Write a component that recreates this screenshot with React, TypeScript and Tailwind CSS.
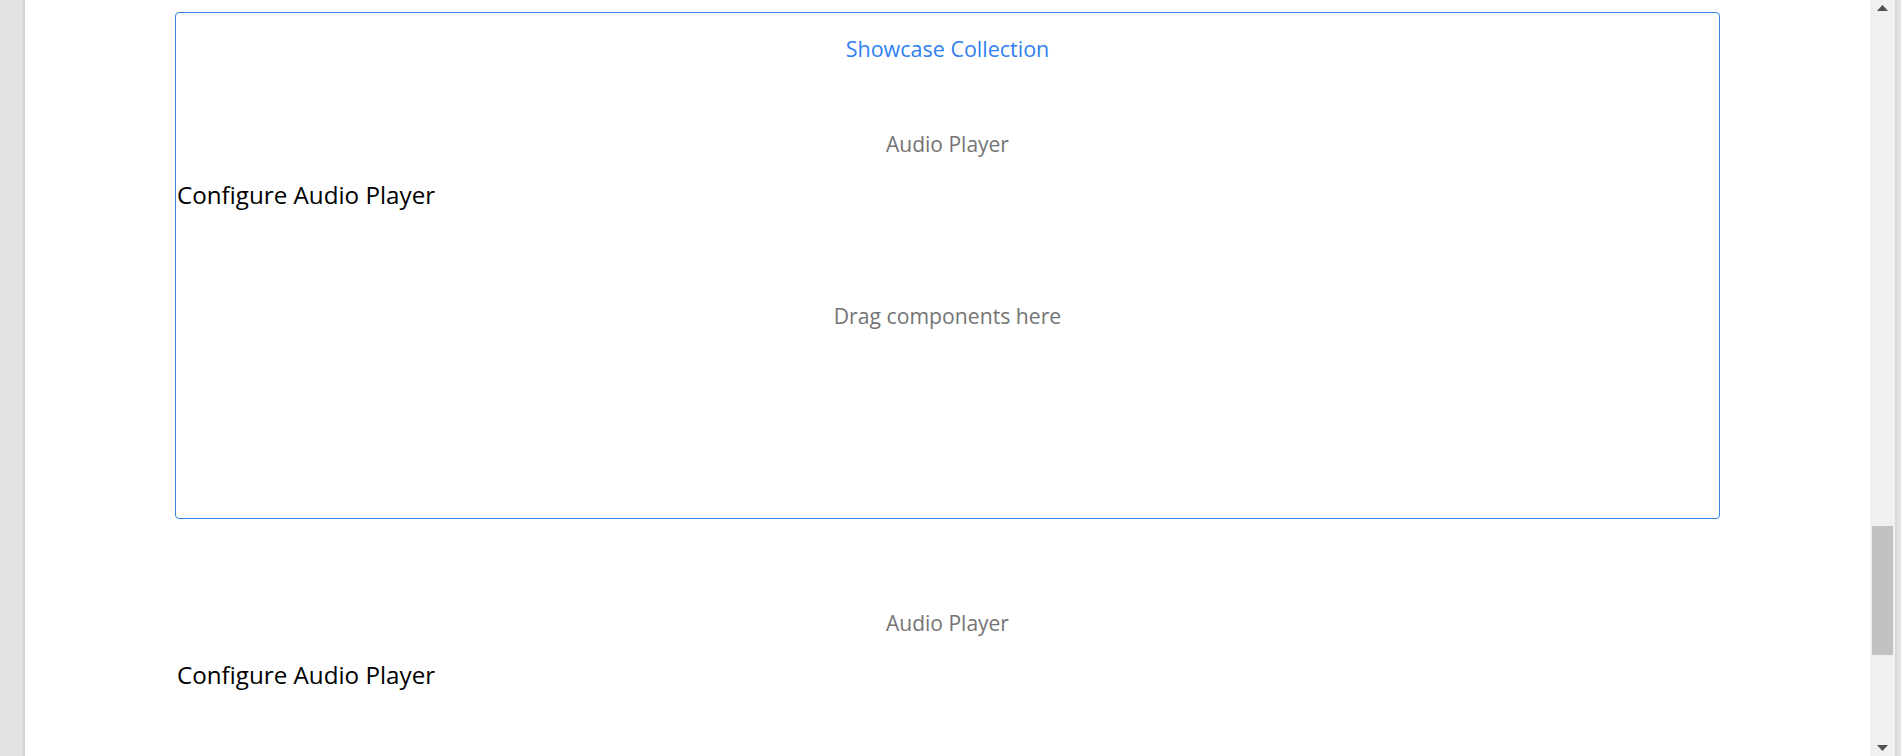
import React from 'react';

const font = { fontFamily: '"Open Sans", "Noto Sans", sans-serif' };

const Triangle = ({ up }: { up: boolean }) => (
  <svg width="11" height="6" viewBox="0 0 11 6" className="block">
    <polygon points={up ? '5.5,0 11,6 0,6' : '0,0 11,0 5.5,6'} fill="#505050" />
  </svg>
);

const Scrollbar = () => (
  <div className="flex w-[25px] shrink-0 flex-col bg-[#f0f0f0]">
    <div className="flex h-[16px] justify-center pt-[5px]">
      <Triangle up />
    </div>
    <div className="flex-1">
      <div className="mx-[2px] mt-[510px] h-[129px] bg-[#c1c1c1]" />
    </div>
    <div className="flex h-[16px] justify-center pt-[5px]">
      <Triangle up={false} />
    </div>
  </div>
);

const AudioPlayer = ({ gap }: { gap: string }) => (
  <div>
    <div className="h-[28px] text-center text-[21px] leading-[28px] text-[#747474]">Audio Player</div>
    <div className={`${gap} h-[32px] pl-[1px] text-[24.2px] leading-[32px] text-black`}>Configure Audio Player</div>
  </div>
);

export default function App() {
  return (
    <div className="flex h-[756px] w-full overflow-hidden bg-[#e3e3e3]" style={font}>
      <div className="w-[25px] shrink-0 border-r-2 border-[#d6d6d6] bg-[#e3e3e3]" />

      <main className="flex-1 overflow-hidden bg-white px-[150px] pt-[12px]">
        <section className="rounded-[4px] border border-[#3584e4] pb-[188px]">
          <div className="mt-[22px] h-[28px] text-center text-[21.5px] leading-[28px] text-[#2f7ff0]">
            Showcase Collection
          </div>
          <div className="mt-[67px]">
            <AudioPlayer gap="mt-[21px]" />
          </div>
          <div className="mt-[91px] h-[28px] text-center text-[21.2px] leading-[28px] text-[#747474]">
            Drag components here
          </div>
        </section>

        <section className="mt-[89px] border border-transparent">
          <AudioPlayer gap="mt-[22px]" />
        </section>
      </main>

      <Scrollbar />
      <div className="w-[6px] shrink-0 border-l-2 border-[#d9d9d9] bg-[#e3e3e3]" />
    </div>
  );
}
